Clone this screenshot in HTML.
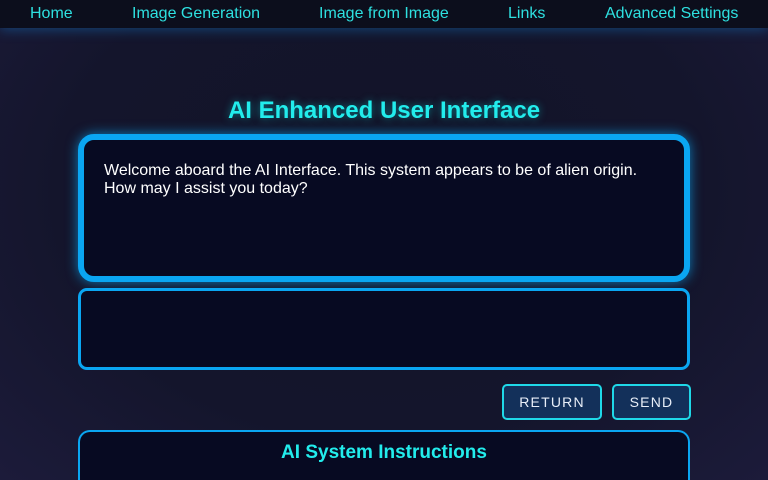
<!DOCTYPE html>
<html style="height:480px;overflow:hidden"><head><style>
*{box-sizing:border-box;margin:0;padding:0}
body{width:768px;height:480px;overflow:hidden;font-family:"Liberation Sans",sans-serif;background:radial-gradient(ellipse at 50% 40%,#121428 0%,#14152c 60%,#1c1b3a 100%);position:relative}
.nav{position:absolute;left:0;top:0;width:768px;height:28px;background:#0c0e1c;box-shadow:0 2px 12px rgba(20,120,200,.45)}
.nav span{position:absolute;top:5px;font-size:16px;color:#2ee0e0;white-space:nowrap}
h1{position:absolute;top:97px;left:0;width:768px;text-align:center;font-size:24px;color:#22ecec;font-weight:bold;text-shadow:0 0 8px rgba(0,230,230,.5)}
.box1{position:absolute;left:78px;top:134px;width:612px;height:148px;border:6px solid #0aa6f2;border-radius:16px;background:#070a22;box-shadow:0 0 12px rgba(10,166,242,.7);color:#fff;font-size:16px;padding:22px 20px;line-height:18px}
.box2{position:absolute;left:78px;top:288px;width:612px;height:82px;border:3px solid #0aa6f2;border-radius:9px;background:#070a22}
.btn{position:absolute;top:384px;height:36px;border:2px solid #1fd8e8;border-radius:5px;background:#13305a;color:#e8eef8;font-size:14px;letter-spacing:1.2px;text-align:center;line-height:32px}
.box3{position:absolute;left:78px;top:430px;width:612px;height:50px;border:2px solid #0aa6f2;border-bottom:none;border-radius:12px 12px 0 0;background:#070a22;text-align:center;color:#22ecec;font-weight:bold;font-size:19px;padding-top:10px}
</style></head><body>
<div class="nav">
<span style="left:30px">Home</span>
<span style="left:132px">Image Generation</span>
<span style="left:319px">Image from Image</span>
<span style="left:508px">Links</span>
<span style="left:605px">Advanced Settings</span>
</div>
<h1>AI Enhanced User Interface</h1>
<div class="box1">Welcome aboard the AI Interface. This system appears to be of alien origin. How may I assist you today?</div>
<div class="box2"></div>
<div class="btn" style="left:502px;width:100px">RETURN</div>
<div class="btn" style="left:612px;width:79px">SEND</div>
<div class="box3">AI System Instructions</div>
</body></html>
